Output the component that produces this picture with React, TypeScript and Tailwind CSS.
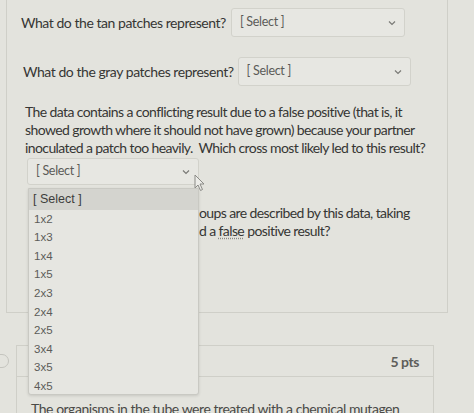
const options = ["1x2", "1x3", "1x4", "1x5", "2x3", "2x4", "2x5", "3x4", "3x5", "4x5"];

function Chevron() {
  return (
    <svg width="8" height="6" viewBox="0 0 8 6" className="shrink-0">
      <path d="M1 1.5 L4 4.5 L7 1.5" fill="none" stroke="#7a7a76" strokeWidth="1.2" />
    </svg>
  );
}

function SelectBox({ className }: { className: string }) {
  return (
    <div
      className={`flex items-center justify-between border border-[#d2d2cb] bg-[#e7e7e2] rounded-[3px] pl-2 pr-2 ${className}`}
    >
      <span className="text-[12.5px] tracking-[-0.3px] text-[#5b5b58]">[ Select ]</span>
      <Chevron />
    </div>
  );
}

export default function App() {
  return (
    <main className="relative w-[474px] h-[413px] overflow-hidden bg-[#e3e3dd] font-['Lato','Open_Sans',sans-serif] text-[#363634] text-[14px] tracking-[-0.45px]">
      {/* question card */}
      <section className="ml-[6px] mr-[26px] h-[313px] border-x border-b border-[#cfcfc8] pl-[14px]">
        <div className="flex items-center pt-[8px]">
          <span>What do the tan patches represent?</span>
          <SelectBox className="ml-[5px] w-[174px] h-[29px]" />
        </div>
        <div className="flex items-center mt-[20px] pl-[2px]">
          <span>What do the gray patches represent?</span>
          <SelectBox className="ml-[4px] w-[173px] h-[29px]" />
        </div>
        <p className="mt-[17px] pl-[4px] leading-[18px] tracking-[-0.6px] whitespace-nowrap">
          The data contains a conflicting result due to a false positive (that is, it
          <br />
          showed growth where it should not have grown) because your partner
          <br />
          inoculated a patch too heavily.&nbsp; Which cross most likely led to this result?
        </p>
        <SelectBox className="ml-[6px] mt-px w-[172px] h-[27px]" />
        <p className="mt-[19px] pl-[178px] leading-[18px] tracking-[-0.6px] whitespace-nowrap">
          oups are described by this data, taking
          <br />d a{" "}
          <span className="underline decoration-dotted decoration-[#8a8a86] underline-offset-2">false</span>{" "}
          positive result?
        </p>
      </section>

      {/* next question header */}
      <section className="relative ml-[16px] mr-[40px] mt-[32px] border border-[#cfcfc8]">
        <div className="flex items-center justify-end h-[31px] pr-[14px] border-b border-[#cfcfc8]">
          <span className="text-[14px] font-bold text-[#5e5e5a]">5 pts</span>
        </div>
        <div className="absolute -left-[24px] top-[8px] w-[16px] h-[14px] rounded-full border border-[#c4c4be]" />
        <p className="pt-[21px] pl-[14px] text-[#4a4a47] whitespace-nowrap">
          The organisms in the tube were treated with a chemical mutagen
        </p>
      </section>

      {/* open dropdown list */}
      <div className="absolute left-[28px] top-[188px] w-[171px] h-[207px] bg-[#e6e6e1] border border-[#c9c9c3] rounded-b-[3px] shadow-[0_1px_3px_rgba(0,0,0,0.12)] font-['Liberation_Sans',Arial,sans-serif] tracking-normal">
        <div className="h-[21px] flex items-center pl-[4px] bg-[#d4d4cf] text-[12.5px] text-[#3d3d3b]">
          [ Select ]
        </div>
        {options.map((o) => (
          <div key={o} className="h-[18.6px] flex items-center pl-[5px] text-[11.5px] text-[#5c5c59]">
            {o}
          </div>
        ))}
      </div>

      {/* mouse cursor */}
      <svg className="absolute left-[194px] top-[174px]" width="12" height="18" viewBox="0 0 12 18">
        <path
          d="M1 1 L1 14 L4 11 L6.5 16.5 L8.5 15.5 L6 10 L10 10 Z"
          fill="#ecece8"
          stroke="#8a8a86"
          strokeWidth="1"
          strokeLinejoin="round"
        />
      </svg>
    </main>
  );
}
